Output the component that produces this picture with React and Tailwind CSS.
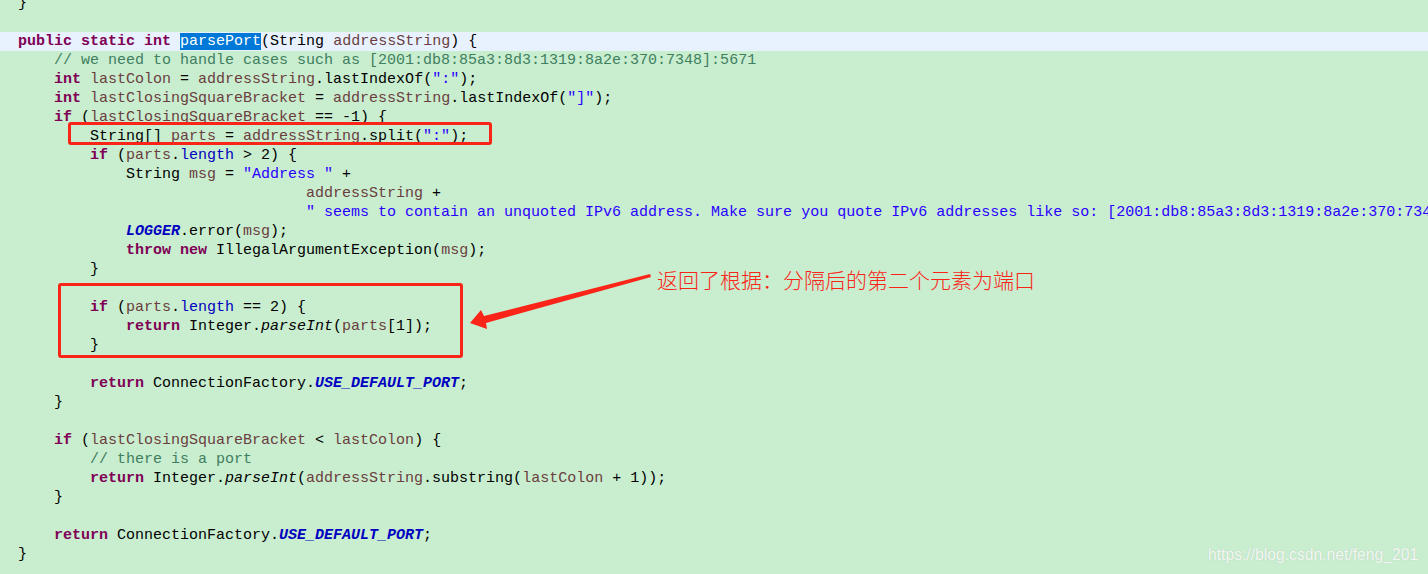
import React from "react";

const K = "text-[#7f0055] font-bold";
const C = "text-[#3f7f5f]";
const S = "text-[#2a00ff]";
const V = "text-[#6a3e3e]";
const F = "text-[#0000c0]";
const FI = "text-[#0000c0] font-bold italic";
const I = "italic";
const SEL = "bg-[#0078d7] text-white";

const sp = (n) => " ".repeat(n);

const lines = [
  [["}"]],
  [],
  [["public", K], [" "], ["static", K], [" "], ["int", K], [" "], ["parsePort", SEL], ["(String "], ["addressString", V], [") {"]],
  [[sp(4)], ["// we need to handle cases such as [2001:db8:85a3:8d3:1319:8a2e:370:7348]:5671", C]],
  [[sp(4)], ["int", K], [" "], ["lastColon", V], [" = "], ["addressString", V], [".lastIndexOf("], ['":"', S], [");"]],
  [[sp(4)], ["int", K], [" "], ["lastClosingSquareBracket", V], [" = "], ["addressString", V], [".lastIndexOf("], ['"]"', S], [");"]],
  [[sp(4)], ["if", K], [" ("], ["lastClosingSquareBracket", V], [" == -1) {"]],
  [[sp(8)], ["String[] "], ["parts", V], [" = "], ["addressString", V], [".split("], ['":"', S], [");"]],
  [[sp(8)], ["if", K], [" ("], ["parts", V], ["."], ["length", F], [" > 2) {"]],
  [[sp(12)], ["String "], ["msg", V], [" = "], ['"Address "', S], [" +"]],
  [[sp(32)], ["addressString", V], [" +"]],
  [[sp(32)], ['" seems to contain an unquoted IPv6 address. Make sure you quote IPv6 addresses like so: [2001:db8:85a3:8d3:1319:8a2e:370:7348]:5671"', S], [";"]],
  [[sp(12)], ["LOGGER", FI], [".error("], ["msg", V], [");"]],
  [[sp(12)], ["throw", K], [" "], ["new", K], [" IllegalArgumentException("], ["msg", V], [");"]],
  [[sp(8)], ["}"]],
  [],
  [[sp(8)], ["if", K], [" ("], ["parts", V], ["."], ["length", F], [" == 2) {"]],
  [[sp(12)], ["return", K], [" Integer."], ["parseInt", I], ["("], ["parts", V], ["[1]);"]],
  [[sp(8)], ["}"]],
  [],
  [[sp(8)], ["return", K], [" ConnectionFactory."], ["USE_DEFAULT_PORT", FI], [";"]],
  [[sp(4)], ["}"]],
  [],
  [[sp(4)], ["if", K], [" ("], ["lastClosingSquareBracket", V], [" < "], ["lastColon", V], [") {"]],
  [[sp(8)], ["// there is a port", C]],
  [[sp(8)], ["return", K], [" Integer."], ["parseInt", I], ["("], ["addressString", V], [".substring("], ["lastColon", V], [" + 1));"]],
  [[sp(4)], ["}"]],
  [],
  [[sp(4)], ["return", K], [" ConnectionFactory."], ["USE_DEFAULT_PORT", FI], [";"]],
  [["}"]],
];

export default function App() {
  return (
    <div className="relative w-[1428px] h-[574px] overflow-hidden bg-[#c9edcf]">
      <div
        className="flex flex-col -mt-[6px] text-[15px] text-black whitespace-pre"
        style={{ fontFamily: '"Liberation Mono", "DejaVu Sans Mono", monospace' }}
      >
        {lines.map((tokens, i) => (
          <div
            key={i}
            className={
              "h-[19px] leading-[19px] pl-[18px] " + (i === 2 ? "bg-[#e8f2fe]" : "")
            }
          >
            {tokens.length === 0 ? " " : null}
            {tokens.map(([t, cls], j) => (
              <span key={j} className={cls || ""}>
                {t}
              </span>
            ))}
          </div>
        ))}
      </div>

      {/* annotation boxes */}
      <div className="absolute left-[68px] top-[122px] w-[424px] h-[23px] border-[3px] border-[#fa2418] rounded-[3px]" />
      <div className="absolute left-[58px] top-[283px] w-[405px] h-[75px] border-[3px] border-[#fa2418] rounded-[3px]" />

      {/* arrow */}
      <svg className="absolute left-0 top-0 pointer-events-none" width="1428" height="574">
        <polygon
          points="470,323 481,310 484,316 650,274 651,277 486,323 487,329"
          fill="#fa2418"
        />
      </svg>

      <div
        className="absolute left-[657px] top-[266px] text-[21px] leading-[26px] text-[#fa2418] whitespace-nowrap"
        style={{ fontFamily: '"Noto Sans CJK SC", sans-serif', fontWeight: 300 }}
      >
        返回了根据：分隔后的第二个元素为端口
      </div>

      <div
        className="absolute left-[1208px] top-[545px] text-[15.7px] leading-[20px] text-white/85 whitespace-nowrap"
        style={{ fontFamily: '"Liberation Sans", Arial, sans-serif', textShadow: "0 0 1px rgba(150,170,150,0.6)" }}
      >
        https://blog.csdn.net/feng_201
      </div>
    </div>
  );
}
